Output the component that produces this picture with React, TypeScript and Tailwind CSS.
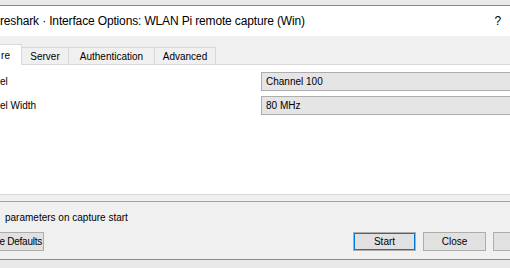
const ui = "font-['Liberation_Sans',Arial,sans-serif]";

function Tab({ label, width }: { label: string; width: string }) {
  return (
    <div
      className={`flex h-[17px] items-center justify-center border-r border-t border-[#d9d9d9] bg-[#f0f0f0] ${width}`}
    >
      {label}
    </div>
  );
}

function Combo({ value }: { value: string }) {
  return (
    <div className="flex h-[19px] w-[260px] items-center border border-[#adadad] bg-[#e5e5e5] pl-[4px]">
      {value}
    </div>
  );
}

function Button({ label, className = '' }: { label: string; className?: string }) {
  return (
    <div
      className={`flex h-[19px] w-[63px] shrink-0 items-center justify-center border border-[#adadad] bg-[#e1e1e1] ${className}`}
    >
      {label}
    </div>
  );
}

export default function App() {
  return (
    <div className={`flex h-[268px] w-[510px] flex-col overflow-hidden whitespace-nowrap bg-[#e9e9e9] text-[10px] text-black ${ui}`}>
      <div className="h-[5px] shrink-0" />
      <div className="flex h-[255px] shrink-0 flex-col border-y border-[#8a8a8a] bg-[#f0f0f0]">
        {/* title bar */}
        <div className="flex h-[30px] shrink-0 items-center justify-between bg-white pr-[9px] text-[12px] tracking-[-0.15px]">
          <span>reshark · Interface Options: WLAN Pi remote capture (Win)</span>
          <span>?</span>
        </div>

        {/* tabs */}
        <div className="mt-[8px] flex h-[20px] shrink-0 items-end">
          <div className="relative z-10 -mb-px flex h-[21px] w-[22px] items-center justify-end border-r border-t border-[#d9d9d9] bg-white pr-[11px]">
            re
          </div>
          <Tab label="Server" width="w-[47px]" />
          <Tab label="Authentication" width="w-[86px]" />
          <Tab label="Advanced" width="w-[61px]" />
        </div>

        {/* page */}
        <div className="h-[131px] shrink-0 border-y border-[#d9d9d9] bg-white pt-[7px]">
          <div className="grid grid-cols-[261px_1fr] gap-y-[5px]">
            <div className="flex items-center">el</div>
            <Combo value="Channel 100" />
            <div className="flex items-center">el Width</div>
            <Combo value="80 MHz" />
          </div>
        </div>

        <div className="mt-[6px] h-px shrink-0 bg-[#a0a0a0]" />

        <div className="mt-[8px] flex h-[14px] shrink-0 items-center pl-[5px]">parameters on capture start</div>

        <div className="mt-[8px] flex h-[19px] shrink-0">
          <div className="flex h-[19px] w-[44px] shrink-0 items-center justify-end border-y border-r border-[#adadad] bg-[#e1e1e1] pr-px tracking-[-0.25px]">
            e Defaults
          </div>
          <Button label="Start" className="ml-[309px] border-[#0078d7] outline outline-1 -outline-offset-2 outline-[#0078d7]" />
          <Button label="Close" className="ml-[7px]" />
          <Button label="Help" className="ml-[7px] w-[70px]" />
        </div>
      </div>
    </div>
  );
}
